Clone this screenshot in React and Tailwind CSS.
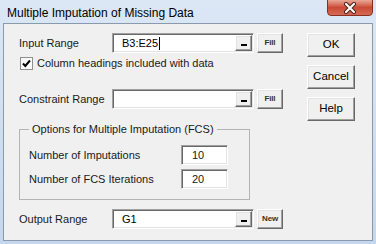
import React from 'react';

const sunken = 'bg-white border border-t-[#a0a0a0] border-l-[#a0a0a0] border-b-white border-r-white shadow-[inset_1px_1px_0_#696969,inset_-1px_-1px_0_#e3e3e3]';
const raised = 'bg-[#f0f0f0] border border-t-white border-l-white border-b-[#696969] border-r-[#696969] shadow-[inset_-1px_-1px_0_#a0a0a0,inset_1px_1px_0_#e3e3e3]';

function RangeBox({ value, caret }) {
  return (
    <div className={`${sunken} w-[142px] h-[20px] flex items-stretch p-[1px]`}>
      <div className="flex-1 flex items-center pl-[8px] text-black">
        {value}
        {caret && <span className="w-px h-[13px] bg-black ml-[1px]" />}
      </div>
      <div className={`${raised} w-[17px] flex items-end justify-center pb-[4px]`}>
        <div className="w-[6px] h-[2px] bg-black" />
      </div>
    </div>
  );
}

function SmallButton({ label }) {
  return (
    <div className={`${raised} w-[26px] h-[20px] flex items-center justify-center text-[8px] font-bold text-[#3a3020] tracking-tight`}>
      {label}
    </div>
  );
}

function DialogButton({ label }) {
  return (
    <div className={`${raised} w-[48px] h-[24px] flex items-center justify-center text-[11.5px] text-black`}>
      {label}
    </div>
  );
}

function RangeRow({ label, value, caret, action }) {
  return (
    <div className="flex items-center h-[20px] pl-[15px]">
      <span className="w-[93px]">{label}</span>
      <RangeBox value={value} caret={caret} />
      <div className="ml-[3px]">
        <SmallButton label={action} />
      </div>
    </div>
  );
}

function NumberRow({ label, value }) {
  return (
    <div className="flex items-center h-[20px]">
      <span className="w-[152px]">{label}</span>
      <div className={`${sunken} w-[47px] h-[20px] flex items-center pl-[10px]`}>{value}</div>
    </div>
  );
}

export default function App() {
  return (
    <div className="w-[376px] h-[244px] flex flex-col bg-gradient-to-b from-[#dbe7f5] to-[#c3d7ee] font-['Liberation_Sans',Arial,sans-serif] text-[11px] text-[#1a1a1a] overflow-hidden">
      {/* Title bar */}
      <div className="h-[23px] flex justify-between shrink-0">
        <span className="pl-[7px] pt-[4px] text-[12px] text-black">Multiple Imputation of Missing Data</span>
        <div className="mr-[3px] -mt-px w-[46px] h-[17px] rounded-b-[4px] border border-[#8b2e22] bg-gradient-to-b from-[#e8a898] via-[#c94a35] to-[#d66a55] flex items-center justify-center">
          <svg width="14" height="12" viewBox="0 0 14 12">
            <path d="M3 2 L11 10 M11 2 L3 10" stroke="#4a1d16" strokeWidth="4" strokeLinecap="round" />
            <path d="M3 2 L11 10 M11 2 L3 10" stroke="#ffffff" strokeWidth="2.2" strokeLinecap="round" />
          </svg>
        </div>
      </div>

      {/* Client area */}
      <div className="mx-[3px] h-[218px] bg-[#f0f0f0] border border-[#8a99ab] flex shrink-0">
        <div className="w-[303px] pt-[9px] flex flex-col">
          <RangeRow label="Input Range" value="B3:E25" caret action="Fill" />

          <div className="mt-[3px] h-[14px] flex items-center pl-[16px] gap-[4px]">
            <div className="w-[13px] h-[13px] border border-[#8e8f8f] bg-gradient-to-br from-[#f4f4f4] to-white flex items-center justify-center">
              <svg width="11" height="11" viewBox="0 0 11 11">
                <path d="M2 5.5 L4.3 8 L9 2.5" stroke="#000" strokeWidth="2" fill="none" />
              </svg>
            </div>
            <span>Column headings included with data</span>
          </div>

          <div className="mt-[19px]">
            <RangeRow label="Constraint Range" value="" action="Fill" />
          </div>

          {/* Group box */}
          <div className="mt-[14px] ml-[15px] w-[231px] flex flex-col">
            <div className="h-[13px] flex">
              <div className="w-[10px] mt-[6px] border-l border-t border-[#b4b4b4]" />
              <span className="px-[3px] leading-[13px] text-[11px]">Options for Multiple Imputation (FCS)</span>
              <div className="flex-1 mt-[6px] border-r border-t border-[#b4b4b4]" />
            </div>
            <div className="border-l border-r border-b border-[#b4b4b4] pl-[9px] pt-[9px] pb-[10px] flex flex-col gap-[4px]">
              <NumberRow label="Number of Imputations" value="10" />
              <NumberRow label="Number of FCS Iterations" value="20" />
            </div>
          </div>

          <div className="mt-[9px]">
            <RangeRow label="Output Range" value="G1" action="New" />
          </div>
        </div>

        <div className="pt-[9px] flex flex-col gap-[8px]">
          <DialogButton label="OK" />
          <DialogButton label="Cancel" />
          <DialogButton label="Help" />
        </div>
      </div>
    </div>
  );
}
